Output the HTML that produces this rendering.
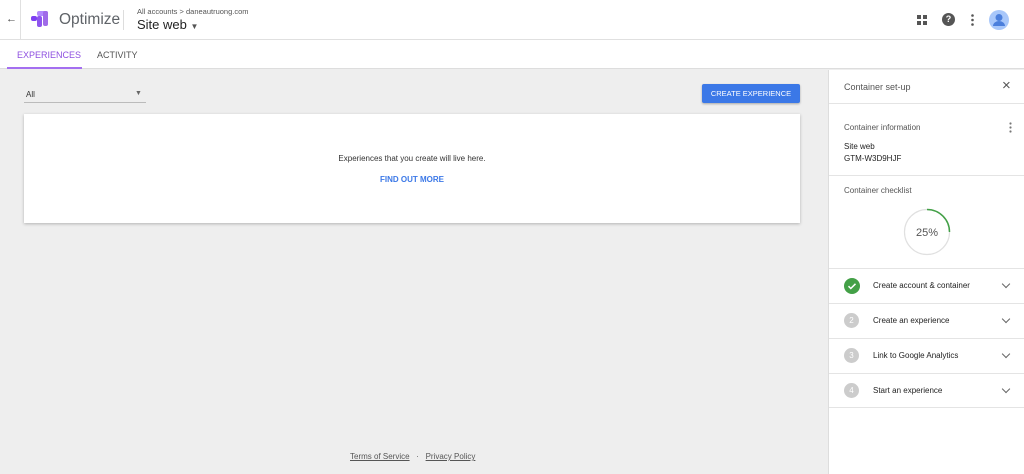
<!DOCTYPE html>
<html><head><style>
*{box-sizing:border-box;margin:0;padding:0}
body{width:1024px;height:474px;overflow:hidden;font-family:"Liberation Sans",sans-serif;background:#eee;position:relative;color:#333}
.abs{position:absolute}
#top{left:0;top:0;width:1024px;height:40px;background:#fff;border-bottom:1px solid #e0e0e0}
#tabs{left:0;top:40px;width:1024px;height:29px;background:#fff;border-bottom:1px solid #ddd}
#side{left:828px;top:70px;width:196px;height:404px;background:#fff;border-left:1px solid #ddd}
.row{position:absolute;left:0;width:196px;border-bottom:1px solid #e4e4e4}
.num{position:absolute;left:15px;width:15px;height:15px;border-radius:50%;background:#ccc;color:#fff;font-size:8px;text-align:center;line-height:15px}
.lbl{position:absolute;left:44px;font-size:8px;color:#222}
.chev{position:absolute;left:174px;width:6px;height:6px;border-right:1.2px solid #666;border-bottom:1.2px solid #666;transform:rotate(45deg)}
</style></head><body>
<div id="top" class="abs">
 <div class="abs" style="left:6px;top:13px;font-size:11px;color:#444">&#8592;</div>
 <div class="abs" style="left:20px;top:0;width:1px;height:40px;background:#e0e0e0"></div>
 <svg class="abs" style="left:30px;top:11px" width="20" height="16" viewBox="0 0 20 16"><rect x="7" y="0" width="11" height="5" rx="2" fill="#b388ff"/><rect x="13" y="0" width="5" height="15" rx="2" fill="#a06be8"/><rect x="1" y="5" width="6" height="5" rx="2" fill="#7e3ff2"/><rect x="7" y="5" width="5" height="11" rx="2" fill="#8e55ee"/></svg>
 <div class="abs" style="left:59px;top:11px;font-size:15.5px;color:#5f6368">Optimize</div>
 <div class="abs" style="left:123px;top:10px;width:1px;height:20px;background:#ddd"></div>
 <div class="abs" style="left:137px;top:7px;font-size:7.5px;color:#555">All accounts &gt; daneautruong.com</div>
 <div class="abs" style="left:137px;top:17px;font-size:13px;color:#222">Site web <span style="font-size:8px;color:#555">&#9660;</span></div>
 <svg class="abs" style="left:917px;top:15px" width="10" height="10"><rect x="0" y="0" width="4" height="4" fill="#555"/><rect x="6" y="0" width="4" height="4" fill="#555"/><rect x="0" y="6" width="4" height="4" fill="#555"/><rect x="6" y="6" width="4" height="4" fill="#555"/></svg>
 <div class="abs" style="left:942px;top:13px;width:13px;height:13px;border-radius:50%;background:#555;color:#fff;font-size:9px;font-weight:bold;text-align:center;line-height:13px">?</div>
 <svg class="abs" style="left:971px;top:14px" width="3" height="12"><circle cx="1.5" cy="1.5" r="1.3" fill="#555"/><circle cx="1.5" cy="6" r="1.3" fill="#555"/><circle cx="1.5" cy="10.5" r="1.3" fill="#555"/></svg>
 <svg class="abs" style="left:989px;top:10px" width="20" height="20"><circle cx="10" cy="10" r="10" fill="#a8c7fa"/><circle cx="10" cy="7.5" r="3.5" fill="#4b7fdc"/><path d="M4 16a6 5 0 0 1 12 0z" fill="#4b7fdc"/></svg>
</div>
<div id="tabs" class="abs">
 <div class="abs" style="left:17px;top:10px;font-size:9px;color:#8e4fe0">EXPERIENCES</div>
 <div class="abs" style="left:7px;top:27px;width:75px;height:2px;background:#a46ff0"></div>
 <div class="abs" style="left:97px;top:10px;font-size:9px;color:#555">ACTIVITY</div>
</div>
<div class="abs" style="left:26px;top:90px;font-size:8px;color:#333">All</div>
<div class="abs" style="left:135px;top:90px;font-size:7px;color:#666">&#9660;</div>
<div class="abs" style="left:24px;top:102px;width:122px;height:1px;background:#bbb"></div>
<div class="abs" style="left:702px;top:84px;width:98px;height:19px;background:#3b78e7;border-radius:2px;color:#fff;font-size:7.5px;text-align:center;line-height:19px;box-shadow:0 1px 2px rgba(0,0,0,.3)">CREATE EXPERIENCE</div>
<div class="abs" style="left:24px;top:114px;width:776px;height:109px;background:#fff;box-shadow:0 1px 3px rgba(0,0,0,.25)">
 <div class="abs" style="left:0;width:776px;top:40px;text-align:center;font-size:8px;color:#333">Experiences that you create will live here.</div>
 <div class="abs" style="left:0;width:776px;top:61px;text-align:center;font-size:8px;color:#3b78e7;font-weight:bold">FIND OUT MORE</div>
</div>
<div class="abs" style="left:350px;top:452px;font-size:8px;color:#555"><u>Terms of Service</u> &nbsp;&nbsp;·&nbsp;&nbsp; <u>Privacy Policy</u></div>
<div id="side" class="abs">
 <div class="row" style="top:0;height:34px"><div class="abs" style="left:15px;top:12px;font-size:9px;color:#555">Container set-up</div><div class="abs" style="left:173px;top:7px;font-size:15px;color:#555">&#215;</div></div>
 <div class="row" style="top:34px;height:72px">
  <div class="abs" style="left:15px;top:19px;font-size:8px;color:#555">Container information</div>
  <svg class="abs" style="left:180px;top:18px" width="3" height="11"><circle cx="1.5" cy="1.5" r="1.1" fill="#777"/><circle cx="1.5" cy="5.5" r="1.1" fill="#777"/><circle cx="1.5" cy="9.5" r="1.1" fill="#777"/></svg>
  <div class="abs" style="left:15px;top:38px;font-size:8px;color:#222">Site web</div>
  <div class="abs" style="left:15px;top:50px;font-size:8px;color:#222">GTM-W3D9HJF</div>
 </div>
 <div class="row" style="top:106px;height:93px">
  <div class="abs" style="left:15px;top:10px;font-size:8px;color:#555">Container checklist</div>
  <svg class="abs" style="left:74px;top:32px" width="48" height="48"><circle cx="24" cy="24" r="22.5" fill="none" stroke="#e0e0e0" stroke-width="1.2"/><path d="M24 1.5A22.5 22.5 0 0 1 46.5 24" fill="none" stroke="#43a047" stroke-width="1.5"/><text x="24" y="28" text-anchor="middle" font-size="11" fill="#555" font-family="Liberation Sans">25%</text></svg>
 </div>
 <div class="row" style="top:199px;height:35px"><svg class="abs" style="left:15px;top:9px" width="16" height="16"><circle cx="8" cy="8" r="8" fill="#43a047"/><path d="M4.5 8.2l2.3 2.3 4.7-4.7" stroke="#fff" stroke-width="1.5" fill="none"/></svg><div class="lbl" style="top:12px">Create account &amp; container</div><div class="chev" style="top:12px"></div></div>
 <div class="row" style="top:234px;height:35px"><div class="num" style="top:9px">2</div><div class="lbl" style="top:12px">Create an experience</div><div class="chev" style="top:12px"></div></div>
 <div class="row" style="top:269px;height:35px"><div class="num" style="top:9px">3</div><div class="lbl" style="top:12px">Link to Google Analytics</div><div class="chev" style="top:12px"></div></div>
 <div class="row" style="top:304px;height:34px"><div class="num" style="top:9px">4</div><div class="lbl" style="top:12px">Start an experience</div><div class="chev" style="top:12px"></div></div>
</div>
</body></html>
